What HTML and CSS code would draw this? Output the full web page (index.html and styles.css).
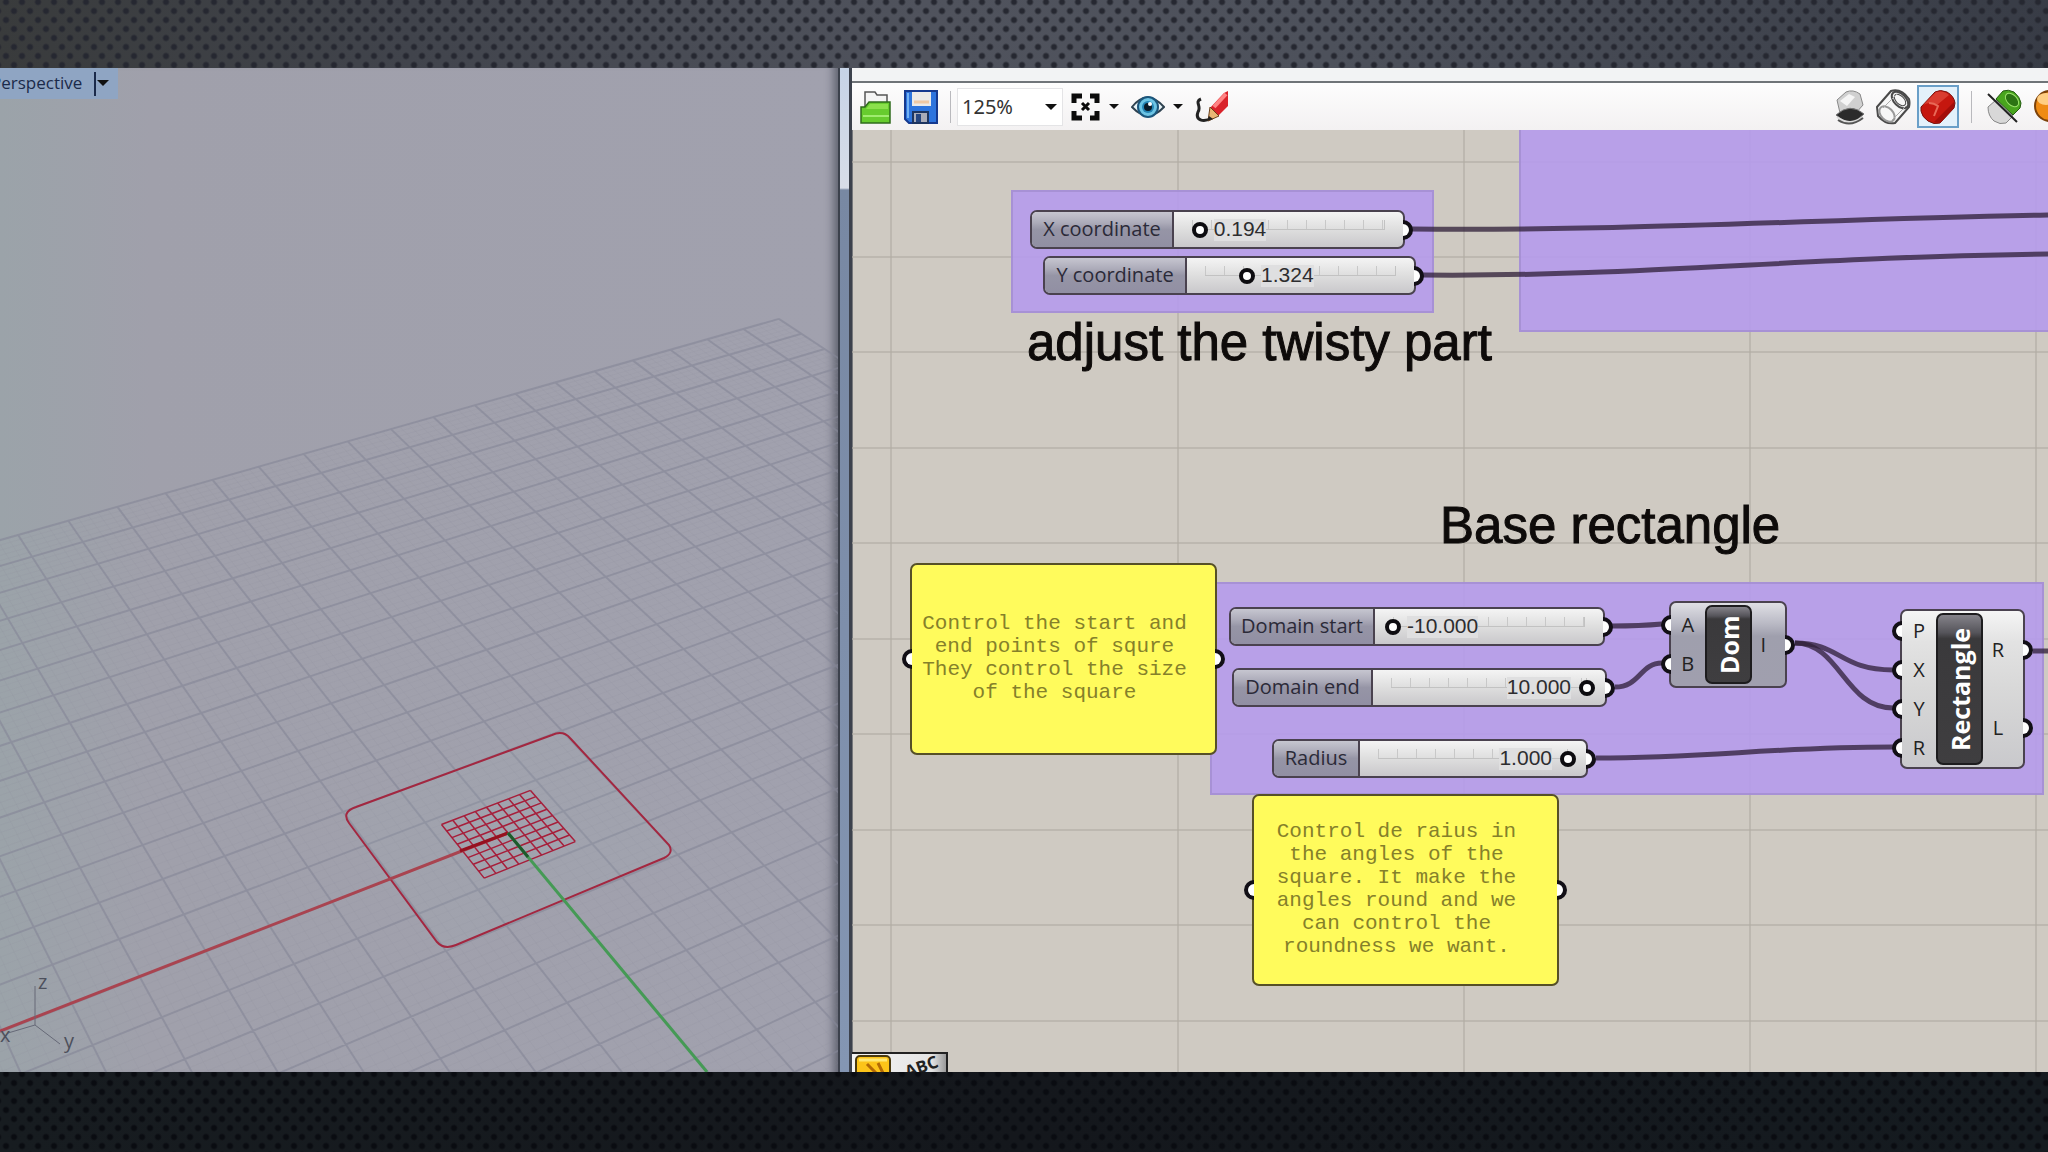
FILE: index.html
```html
<!DOCTYPE html>
<html lang="en">
<head>
    <meta charset="UTF-8">
    <meta name="viewport" content="width=device-width, initial-scale=1.0">
    <title>Base rectangle</title>
    <link rel="stylesheet" href="styles.css">
</head>
<body>
    <div class="band band-top"></div>
    <main class="workspace">
        <section class="viewport">
            <svg class="scene" viewBox="0 68 838 1004" preserveAspectRatio="xMinYMin slice">
                <path id="minorGrid" class="minor" />
                <path id="majorGrid" class="major" />
                <path class="glow" d="M343 812 L565 730 L677 854 L446 951 Z" />
                <path id="redGrid" class="red-grid" />
                <path class="outline" d="M356 807 L552 735 Q563 730 570 738 L669 845 Q674 853 664 858 L456 945 Q444 950 437 942 L349 823 Q341 812 356 807 Z" />
                <path class="axis-x" d="M508 833 L0 1031" />
                <path class="axis-x strong" d="M508 833 L460 851" />
                <path class="axis-y" d="M508 833 L707 1072" />
                <path class="axis-y strong" d="M508 833 L528 857" />
                <path class="tripod" d="M35 1025 V986 M35 1025 L8 1033 M35 1025 L60 1044" />
                <text class="axis-name" x="38" y="989">z</text>
                <text class="axis-name" x="64" y="1048">y</text>
                <text class="axis-name" x="0" y="1042">x</text>
            </svg>
            <button class="view-title"><span>Perspective</span><i class="arrow"></i></button>
        </section>

        <div class="divider"></div>

        <section class="editor">
            <div class="strip"></div>
            <div class="toolbar">
                <button class="tool" aria-label="Open">
                    <svg width="32" height="36" viewBox="0 0 32 36">
                        <path d="M5 20 V3 H15 L17 6 H27 V20 Z" fill="#f4f4f4" stroke="#555" stroke-width="1.5" />
                        <path d="M1 34 V18 H5 L9 13 H30 V34 Z" fill="#67cc2e" stroke="#2f6b1c" stroke-width="1.5" />
                        <path d="M3 20 H6 L10 15 H28 V20 Z" fill="#8be04c" />
                        <path d="M3 27 H29" stroke="#a0ec70" stroke-width="2" />
                    </svg>
                </button>
                <button class="tool" aria-label="Save">
                    <svg width="34" height="36" viewBox="0 0 34 36">
                        <path d="M1 2 H33 V34 H5 L1 30 Z" fill="#2d74dd" stroke="#15398f" stroke-width="2" />
                        <path d="M4 4 V29" stroke="#73b2f4" stroke-width="2" />
                        <rect x="8" y="3" width="19" height="14" fill="#eceae8" />
                        <path d="M10 13 H25" stroke="#f0c9a4" stroke-width="3" />
                        <rect x="9" y="23" width="15" height="11" fill="#a9acb8" stroke="#1d3560" stroke-width="2" />
                        <rect x="12" y="25" width="5" height="8" fill="#25457f" />
                    </svg>
                </button>
                <i class="sep"></i>
                <div class="zoom">
                    <select aria-label="Zoom"><option>125%</option></select>
                    <i class="arrow"></i>
                </div>
                <button class="tool" aria-label="Zoom extents">
                    <svg width="30" height="30" viewBox="0 0 30 30" fill="none" stroke="#0b0b0b">
                        <path d="M3 11 V4 H11 M19 4 H26 V11 M26 19 V26 H19 M11 26 H3 V19" stroke-width="5" />
                        <path d="M11 11 L18 18 M18 11 L11 18" stroke-width="3" />
                    </svg>
                    <i class="arrow small"></i>
                </button>
                <button class="tool" aria-label="Preview">
                    <svg width="34" height="26" viewBox="0 0 34 26">
                        <path d="M1 13 Q16 -6 33 13 Q17 30 1 13 Z" fill="#e8f4f8" stroke="#2e4250" stroke-width="2" />
                        <circle cx="17" cy="13" r="10" fill="#6cc4e4" stroke="#1b567c" stroke-width="2" />
                        <circle cx="17" cy="13" r="6" fill="#2384b4" />
                        <circle cx="17" cy="13" r="4" fill="#091b28" />
                        <circle cx="19" cy="10" r="2" fill="#fff" />
                    </svg>
                    <i class="arrow small"></i>
                </button>
                <button class="tool" aria-label="Sketch">
                    <svg width="36" height="34" viewBox="0 0 36 34">
                        <path d="M6 9 C-1 12 7 16 3 22 C0 30 8 33 17 28" fill="none" stroke="#222" stroke-width="3" />
                        <path d="M15 18 L29 3 L33 1 V16 L23 26 Z" fill="#d9222a" />
                        <path d="M19 17 L31 4" stroke="#ff8484" stroke-width="4" />
                        <path d="M15 17 L24 26 L13 31 Z" fill="#e9b676" stroke="#6c421d" />
                        <path d="M14 26 L18 29 L12 31 Z" fill="#222" />
                    </svg>
                </button>
                <div class="modes">
                    <button class="tool" aria-label="No preview">
                        <svg width="30" height="36" viewBox="0 0 30 36">
                            <path d="M2 11 L11 3 Q18 0 25 5 L28 16 L20 25 L5 24 Z" fill="#d0d0d0" stroke="#888" />
                            <path d="M5 12 L14 5 L20 8 L12 17 Z" fill="#f5f5f5" />
                            <path d="M1 26 Q15 13 29 25 Q15 40 1 26 Z" fill="#2b2b2b" stroke="#777" />
                            <path d="M2 28 Q15 38 28 28" fill="none" stroke="#ddd" stroke-width="2" />
                            <path d="M3 31 Q15 39 28 29" fill="none" stroke="#555" stroke-width="2" />
                        </svg>
                    </button>
                    <button class="tool" aria-label="Wireframe preview">
                        <svg width="36" height="36" viewBox="0 0 36 36" fill="#f7f7f7" stroke="#4a4a4a" stroke-width="2">
                            <path d="M2 18 L16 2 Q26 -1 34 10 Q35 14 34 18 L20 34 Q11 36 3 27 Z" />
                            <ellipse cx="25" cy="11" rx="6" ry="10" transform="rotate(-45 25 11)" />
                            <ellipse cx="25" cy="11" rx="4" ry="7" transform="rotate(-45 25 11)" stroke-width="1" />
                            <ellipse cx="12" cy="25" rx="6" ry="9" transform="rotate(-45 12 25)" stroke="#999" />
                            <path d="M8 19 L22 5 M17 31 L31 17" stroke="#aaa" stroke-width="1" />
                        </svg>
                    </button>
                    <button class="tool active" aria-label="Shaded preview">
                        <svg width="36" height="36" viewBox="0 0 36 36">
                            <path d="M1 18 L15 3 Q20 0 27 3 Q34 7 35 14 L34 19 L20 34 Q14 36 8 32 Q2 28 1 22 Z" fill="#c5170f" stroke="#77110c" />
                            <path d="M3 16 L16 3 Q24 1 29 6 L17 16 Q10 12 3 16 Z" fill="#d93c30" />
                            <path d="M9 14 Q14 14 18 17 L14 27" fill="none" stroke="#e86a58" stroke-width="2" />
                            <path d="M34 13 V19 L20 34 L14 33 Z" fill="#a30e0a" />
                        </svg>
                    </button>
                    <i class="sep"></i>
                    <button class="tool" aria-label="Preview selected">
                        <svg width="36" height="36" viewBox="0 0 36 36">
                            <path d="M2 18 L10 11 L27 27 L20 34 Q14 36 8 32 Q2 27 2 18 Z" fill="#d8d8d8" stroke="#888" />
                            <path d="M10 10 L17 2 Q22 0 28 3 Q34 8 35 14 L34 19 L27 26 Z" fill="#48a51d" stroke="#245c11" />
                            <ellipse cx="26" cy="11" rx="5" ry="8" transform="rotate(-45 26 11)" fill="#2c7413" stroke="#9ce36c" />
                            <path d="M2 5 L31 33" stroke="#222" stroke-width="2" />
                        </svg>
                    </button>
                    <button class="tool" aria-label="Mesh settings">
                        <svg width="36" height="36" viewBox="0 0 36 36">
                            <circle cx="18" cy="17" r="15" fill="#ef8b14" stroke="#7c420a" stroke-width="2" />
                            <ellipse cx="14" cy="10" rx="9" ry="6" fill="#ffce82" />
                        </svg>
                    </button>
                </div>
            </div>

            <div class="canvas">
                <svg class="layer">
                    <g transform="translate(-852 -130)">
                        <path class="grid-line" d="M891 130 V1072 M1178 130 V1072 M1464 130 V1072 M1750 130 V1072 M2036 130 V1072" />
                        <path class="grid-line" d="M852 162 H2900 M852 257 H2900 M852 352 H2900 M852 448 H2900 M852 543 H2900 M852 639 H2900 M852 734 H2900 M852 830 H2900 M852 925 H2900 M852 1021 H2900" />
                    </g>
                </svg>
                <div class="group group-xy"></div>
                <div class="group group-twist"></div>
                <div class="group group-base"></div>
                <svg class="layer">
                    <g class="wires" transform="translate(-852 -130)">
                        <path d="M1412 229 C1640 231 1820 219 2048 215" />
                        <path d="M1423 275 C1640 277 1800 257 2048 254" />
                        <path d="M1612 626 Q1640 626 1662 624" />
                        <path d="M1615 687 C1640 687 1640 663 1662 663" />
                        <path d="M1795 643 C1840 643 1840 670 1893 670" />
                        <path d="M1795 643 C1840 643 1845 708 1893 708" />
                        <path d="M1596 758 C1710 758 1770 747 1893 747" />
                        <path d="M2033 651 H2048" />
                    </g>
                </svg>

                <h2 class="note note-twist">adjust the twisty part</h2>
                <h2 class="note note-base">Base rectangle</h2>

                <div class="node slider slider-x">
                    <label for="x">X coordinate</label>
                    <div class="track" style="--at: 0.04">
                        <input type="range" id="x" min="0" max="4.85" step="0.001" value="0.194">
                        <output for="x">0.194</output>
                    </div>
                </div>
                <div class="node slider slider-y">
                    <label for="y">Y coordinate</label>
                    <div class="track" style="--at: 0.22">
                        <input type="range" id="y" min="0" max="6" step="0.001" value="1.324">
                        <output for="y">1.324</output>
                    </div>
                </div>
                <div class="node slider slider-start">
                    <label for="start">Domain start</label>
                    <div class="track" style="--at: 0">
                        <input type="range" id="start" min="-10" max="10" step="0.001" value="-10">
                        <output for="start">-10.000</output>
                    </div>
                </div>
                <div class="node slider slider-end">
                    <label for="end">Domain end</label>
                    <div class="track before" style="--at: 1">
                        <input type="range" id="end" min="-10" max="10" step="0.001" value="10">
                        <output for="end">10.000</output>
                    </div>
                </div>
                <div class="node slider slider-radius">
                    <label for="radius">Radius</label>
                    <div class="track before" style="--at: 1">
                        <input type="range" id="radius" min="0" max="1" step="0.001" value="1">
                        <output for="radius">1.000</output>
                    </div>
                </div>

                <div class="node component dom">
                    <ul class="inputs"><li>A</li><li>B</li></ul>
                    <div class="name">Dom</div>
                    <ul class="outputs"><li>I</li></ul>
                </div>
                <div class="node component rectangle">
                    <ul class="inputs"><li>P</li><li>X</li><li>Y</li><li>R</li></ul>
                    <div class="name">Rectangle</div>
                    <ul class="outputs"><li>R</li><li>L</li></ul>
                </div>

                <div class="node panel panel-domain">
                    <p>Control the start and<br>end points of squre<br>They control the size<br>of the square</p>
                </div>
                <div class="node panel panel-radius">
                    <p>Control de raius in<br>the angles of the<br>square. It make the<br>angles round and we<br>can control the<br>roundness we want.</p>
                </div>

                <div class="palette">
                    <svg width="36" height="36" viewBox="0 0 36 36">
                        <rect x="1" y="1" width="34" height="40" rx="4" fill="#fcc419" stroke="#4a3a10" stroke-width="2" />
                        <path d="M4 5 H32" stroke="#ffe873" stroke-width="3" />
                        <path d="M12 9 L21 18 M23 8 L28 18" stroke="#b36a05" stroke-width="3" />
                    </svg>
                    <span>ABC</span>
                </div>
            </div>
        </section>
    </main>
    <div class="band band-bottom"></div>
    <script src="scene.js"></script>
</body>
</html>
```
FILE: styles.css
```css
*,
*::before,
*::after {
    box-sizing: border-box;
}
body {
    margin: 0;
    min-height: 100vh;
    display: flex;
    flex-direction: column;
    overflow: hidden;
    font-family: 'Open Sans', 'Noto Sans', sans-serif;
    color: #222;
}
button {
    border: none;
    background: none;
    padding: 0;
    font: inherit;
    color: inherit;
}
h2, p, ul {
    margin: 0;
    padding: 0;
}

/* perforated metal above and below */
.band {
    --dot: #262831;
    background-image:
        radial-gradient(circle, var(--dot) 2px, transparent 4px),
        radial-gradient(circle, var(--dot) 2px, transparent 4px),
        var(--metal);
    background-size: 16px 18px, 16px 18px, 100% 100%;
    background-position: -2px -7px, 6px 2px, 0 0;
}
.band-top {
    --metal: linear-gradient(90deg, #393b3c, #41444c 20%, #50535d 45%, #4d515b 65%, #383c46);
    height: 68px;
}
.band-bottom {
    --dot: #0a0c11;
    --metal: linear-gradient(90deg, #171c20, #14171c 50%, #151b20);
    height: 80px;
}

.workspace {
    flex: 1;
    display: grid;
    grid-template-columns: 838fr 14px 1196fr;
    min-height: 0;
}

/* perspective view */
.viewport {
    position: relative;
    overflow: hidden;
    background: linear-gradient(90deg, #9ba3a9, #a0a0ab 18%, #a1a1ae);
    box-shadow: inset -12px 0 10px -8px #5c5f6c;
}
.scene {
    position: absolute;
    width: 100%;
    height: 100%;
    fill: none;
}
.minor {
    stroke: #8b8c9c;
    stroke-opacity: 0.14;
}
.major {
    stroke: #868797;
    stroke-width: 2;
    stroke-opacity: 0.6;
}
.glow {
    fill: #9fb0b4;
    fill-opacity: 0.15;
}
.red-grid {
    stroke: #a71f3b;
    stroke-width: 1.5;
}
.outline {
    stroke: #a32740;
    stroke-width: 2;
}
.axis-x {
    stroke: #a94450;
    stroke-width: 3;
}
.axis-x.strong {
    stroke: #96101f;
}
.axis-y {
    stroke: #459a55;
    stroke-width: 3;
}
.axis-y.strong {
    stroke: #1c5a2c;
}
.tripod {
    stroke: #666977;
}
.axis-name {
    font-size: 20px;
    fill: #4d505c;
}
.view-title {
    position: relative;
    display: flex;
    align-items: center;
    gap: 15px;
    width: 118px;
    height: 31px;
    padding-bottom: 2px;
    background: #8fa5c3;
    color: #1b2a4a;
    font-size: 17px;
}
.view-title span {
    margin-left: -9px;
}
.view-title .arrow::before {
    content: '';
    position: absolute;
    top: 4px;
    width: 2px;
    height: 24px;
    margin-left: -9px;
    background: #1b2a4a;
}
.arrow {
    border: 6px solid transparent;
    border-top-color: #111;
    border-bottom: none;
}
.arrow.small {
    border-width: 5px;
    border-bottom: none;
}

.divider {
    border: solid #3c414c;
    border-width: 0 3px 0 2px;
    background: linear-gradient(#c6d3e6, #d8dde8 120px, #7888a3 122px, #8496b3);
}

/* node editor */
.editor {
    display: flex;
    flex-direction: column;
    min-width: 0;
    overflow: hidden;
}
.strip {
    height: 15px;
    background: #f2f3f4;
    border-bottom: 2px solid #6f7478;
}
.toolbar {
    display: flex;
    align-items: center;
    gap: 12px;
    height: 47px;
    padding-left: 8px;
    background: linear-gradient(#fdfdfd, #f3f1f2);
}
.tool {
    display: flex;
    align-items: center;
    gap: 8px;
}
.sep {
    width: 1px;
    height: 32px;
    background: #b9b9bd;
}
.zoom {
    position: relative;
    display: flex;
    align-items: center;
    width: 106px;
    margin-left: -6px;
    margin-right: -4px;
}
.zoom select {
    appearance: none;
    width: 100%;
    height: 38px;
    padding: 0 4px;
    border: 1px solid #e4e4e6;
    background: #fff;
    color: #333;
    font-family: 'Noto Sans', sans-serif;
    font-size: 20px;
}
.zoom .arrow {
    position: absolute;
    right: 6px;
}
.modes {
    display: flex;
    align-items: center;
    gap: 10px;
    margin-left: auto;
    margin-right: -20px;
}
.modes .sep {
    margin: 0 4px 0 2px;
}
.tool.active {
    padding: 1px;
    border: 2px solid #6a9fc8;
    background: #e3f1fb;
    height: 43px;
    margin-left: -4px;
}

.canvas {
    position: relative;
    flex: 1;
    overflow: hidden;
    background: #cfcac2;
    box-shadow: inset 1px 0 #77797c;
}
.layer {
    position: absolute;
    inset: 0;
    width: 100%;
    height: 100%;
    fill: none;
}
.grid-line {
    stroke: #b0aca4;
    stroke-width: 2;
    stroke-opacity: 0.6;
}
.wires {
    stroke: #2f2038;
    stroke-width: 5;
    stroke-opacity: 0.76;
}
.group {
    position: absolute;
    background: rgba(181, 155, 236, 0.9);
    border: 2px solid rgba(160, 138, 205, 0.7);
}
.group-xy {
    left: 159px;
    top: 60px;
    width: 423px;
    height: 123px;
}
.group-twist {
    left: 667px;
    top: -2px;
    right: -2px;
    height: 204px;
}
.group-base {
    left: 358px;
    top: 452px;
    width: 834px;
    height: 213px;
}
.note {
    position: absolute;
    font-family: 'Liberation Sans', Arial, sans-serif;
    font-size: 51px;
    font-weight: normal;
    line-height: 58px;
    color: #0e0b0a;
    -webkit-text-stroke: 1px #0e0b0a;
    white-space: nowrap;
}
.note-twist {
    left: 175px;
    top: 184px;
}
.note-base {
    left: 588px;
    top: 367px;
}

.node {
    position: absolute;
    display: flex;
    isolation: isolate;
    border: 2px solid #4a424f;
    border-radius: 7px;
}

/* half circle grips on the node edges */
.slider::after,
.panel::before,
.panel::after,
.component li::after {
    content: '';
    position: absolute;
    top: 50%;
    width: 10px;
    height: 20px;
    margin-top: -10px;
    border: 4px solid #120f16;
    background: #fff;
}
.slider::after,
.panel::after,
.outputs li::after {
    left: 100%;
    border-left: none;
    border-radius: 0 10px 10px 0;
}
.panel::before,
.inputs li::after {
    right: 100%;
    border-right: none;
    border-radius: 10px 0 0 10px;
}

.slider {
    height: 39px;
    background: linear-gradient(#f4f4f4, #dedede 50%, #c9c8cb);
}
.slider label {
    flex: none;
    display: flex;
    align-items: center;
    justify-content: center;
    padding-bottom: 2px;
    border-right: 2px solid #4a424f;
    border-radius: 5px 0 0 5px;
    background: linear-gradient(#c6c6d0, #adacba 30%, #9695a6 50%, #918fa3);
    color: #2b2a38;
    font-size: 20px;
}
.track {
    position: relative;
    flex: 1;
    display: flex;
    align-items: center;
}
.track::before {
    content: '';
    position: absolute;
    left: 18px;
    right: 18px;
    bottom: 50%;
    height: 10px;
    border-bottom: 1px solid #c2c2c2;
    border-right: 1px solid #c2c2c2;
    background: repeating-linear-gradient(90deg, #c8c8c8 0 1px, transparent 1px 19px);
}
.track input {
    appearance: none;
    position: relative;
    width: 100%;
    height: 100%;
    margin: 0;
    padding: 0 10px;
    background: none;
}
.track input::-webkit-slider-thumb {
    appearance: none;
    width: 16px;
    height: 16px;
    border: 4px solid #0d0c10;
    border-radius: 50%;
    background: #fff;
}
.track output {
    position: absolute;
    left: calc(32px + var(--at) * (100% - 36px));
    padding-bottom: 2px;
    background: #dfdfe0;
    font-family: 'Liberation Sans', Arial, sans-serif;
    font-size: 21px;
    line-height: 20px;
    color: #2d2d2f;
}
.track.before output {
    left: auto;
    right: 34px;
}
.slider-x {
    left: 178px;
    top: 80px;
    width: 375px;
}
.slider-y {
    left: 191px;
    top: 126px;
    width: 373px;
}
.slider-x label,
.slider-y label {
    width: 142px;
}
.slider-start {
    left: 377px;
    top: 477px;
    width: 376px;
}
.slider-start label {
    width: 144px;
}
.slider-end {
    left: 380px;
    top: 538px;
    width: 375px;
}
.slider-end label {
    width: 139px;
}
.slider-radius {
    left: 420px;
    top: 609px;
    width: 316px;
}
.slider-radius label {
    width: 86px;
}

.component {
    background: linear-gradient(#f5f5f5, #e2e2e2 20%, #d8d8d8 50%, #c9c9cc);
}
.component ul {
    flex: 1;
    display: flex;
    flex-direction: column;
    list-style: none;
    text-align: center;
    font-size: 20px;
    line-height: 24px;
}
.component li {
    position: relative;
    flex: 1;
    display: flex;
    align-items: center;
    justify-content: center;
}
.component .outputs li {
    padding-right: 10px;
}
.component .name {
    display: flex;
    align-items: center;
    justify-content: center;
    width: 47px;
    margin: 2px 0;
    border: 2px solid #1d1c1e;
    border-radius: 7px;
    background: linear-gradient(to top, #85838a, #55545a 12%, #3a393b 16%, #3f3e40);
    color: #fff;
    font-size: 25px;
    font-weight: bold;
    line-height: 28px;
    writing-mode: vertical-rl;
    transform: rotate(180deg);
}
.dom {
    left: 817px;
    top: 471px;
    width: 118px;
    height: 87px;
    background: linear-gradient(#dfdfe5, #b9b9c4 25%, #9f9fad 40%, #a09fae);
}
.dom .inputs {
    padding: 2px 0;
}
.rectangle {
    left: 1048px;
    top: 479px;
    width: 125px;
    height: 160px;
}
.rectangle .inputs {
    flex: 0 0 34px;
}

.panel {
    width: 307px;
    height: 192px;
    align-items: center;
    justify-content: center;
    padding: 0 18px 3px 0;
    background: #fffb5c;
    border-color: #565027;
}
.panel p {
    font-family: 'Liberation Mono', 'Courier New', monospace;
    font-size: 21px;
    line-height: 23px;
    text-align: center;
    color: #85802a;
    white-space: nowrap;
}
.panel-domain {
    left: 58px;
    top: 433px;
}
.panel-radius {
    left: 400px;
    top: 664px;
}

/* canvas widget cut off by the lower edge */
.palette {
    position: absolute;
    left: 0;
    bottom: 0;
    display: flex;
    gap: 12px;
    width: 96px;
    height: 20px;
    padding: 1px 3px;
    overflow: hidden;
    border: solid #222;
    border-width: 2px 2px 0 0;
    background: linear-gradient(90deg, #f4f4f4, #e4e4e4 85%, #999);
}
.palette svg {
    flex: none;
}
.palette span {
    font-size: 17px;
    font-weight: bold;
    line-height: 24px;
    transform: rotate(-20deg);
}
```
FILE: scene.js
```js
// ground plane to screen; one unit is one major grid cell
function project(u, v) {
    const w = 1 - 0.01389 * u - 0.0212 * v;
    const x = (508 - 63.28 * u + 16.6 * v) / w;
    const y = (833 + 10.47 * u + 15.06 * v) / w;
    return x.toFixed(1) + ' ' + y.toFixed(1);
}

function gridPath(extent, step) {
    const count = Math.round(2 * extent / step);
    let d = '';
    for (let i = 0; i <= count; i++) {
        const t = -extent + i * step;
        d += `M${project(t, -extent)} L${project(t, extent)} `;
        d += `M${project(-extent, t)} L${project(extent, t)} `;
    }
    return d;
}

document.getElementById('minorGrid').setAttribute('d', gridPath(14, 0.2));
document.getElementById('majorGrid').setAttribute('d', gridPath(14, 1));
document.getElementById('redGrid').setAttribute('d', gridPath(0.8, 0.2));
```
